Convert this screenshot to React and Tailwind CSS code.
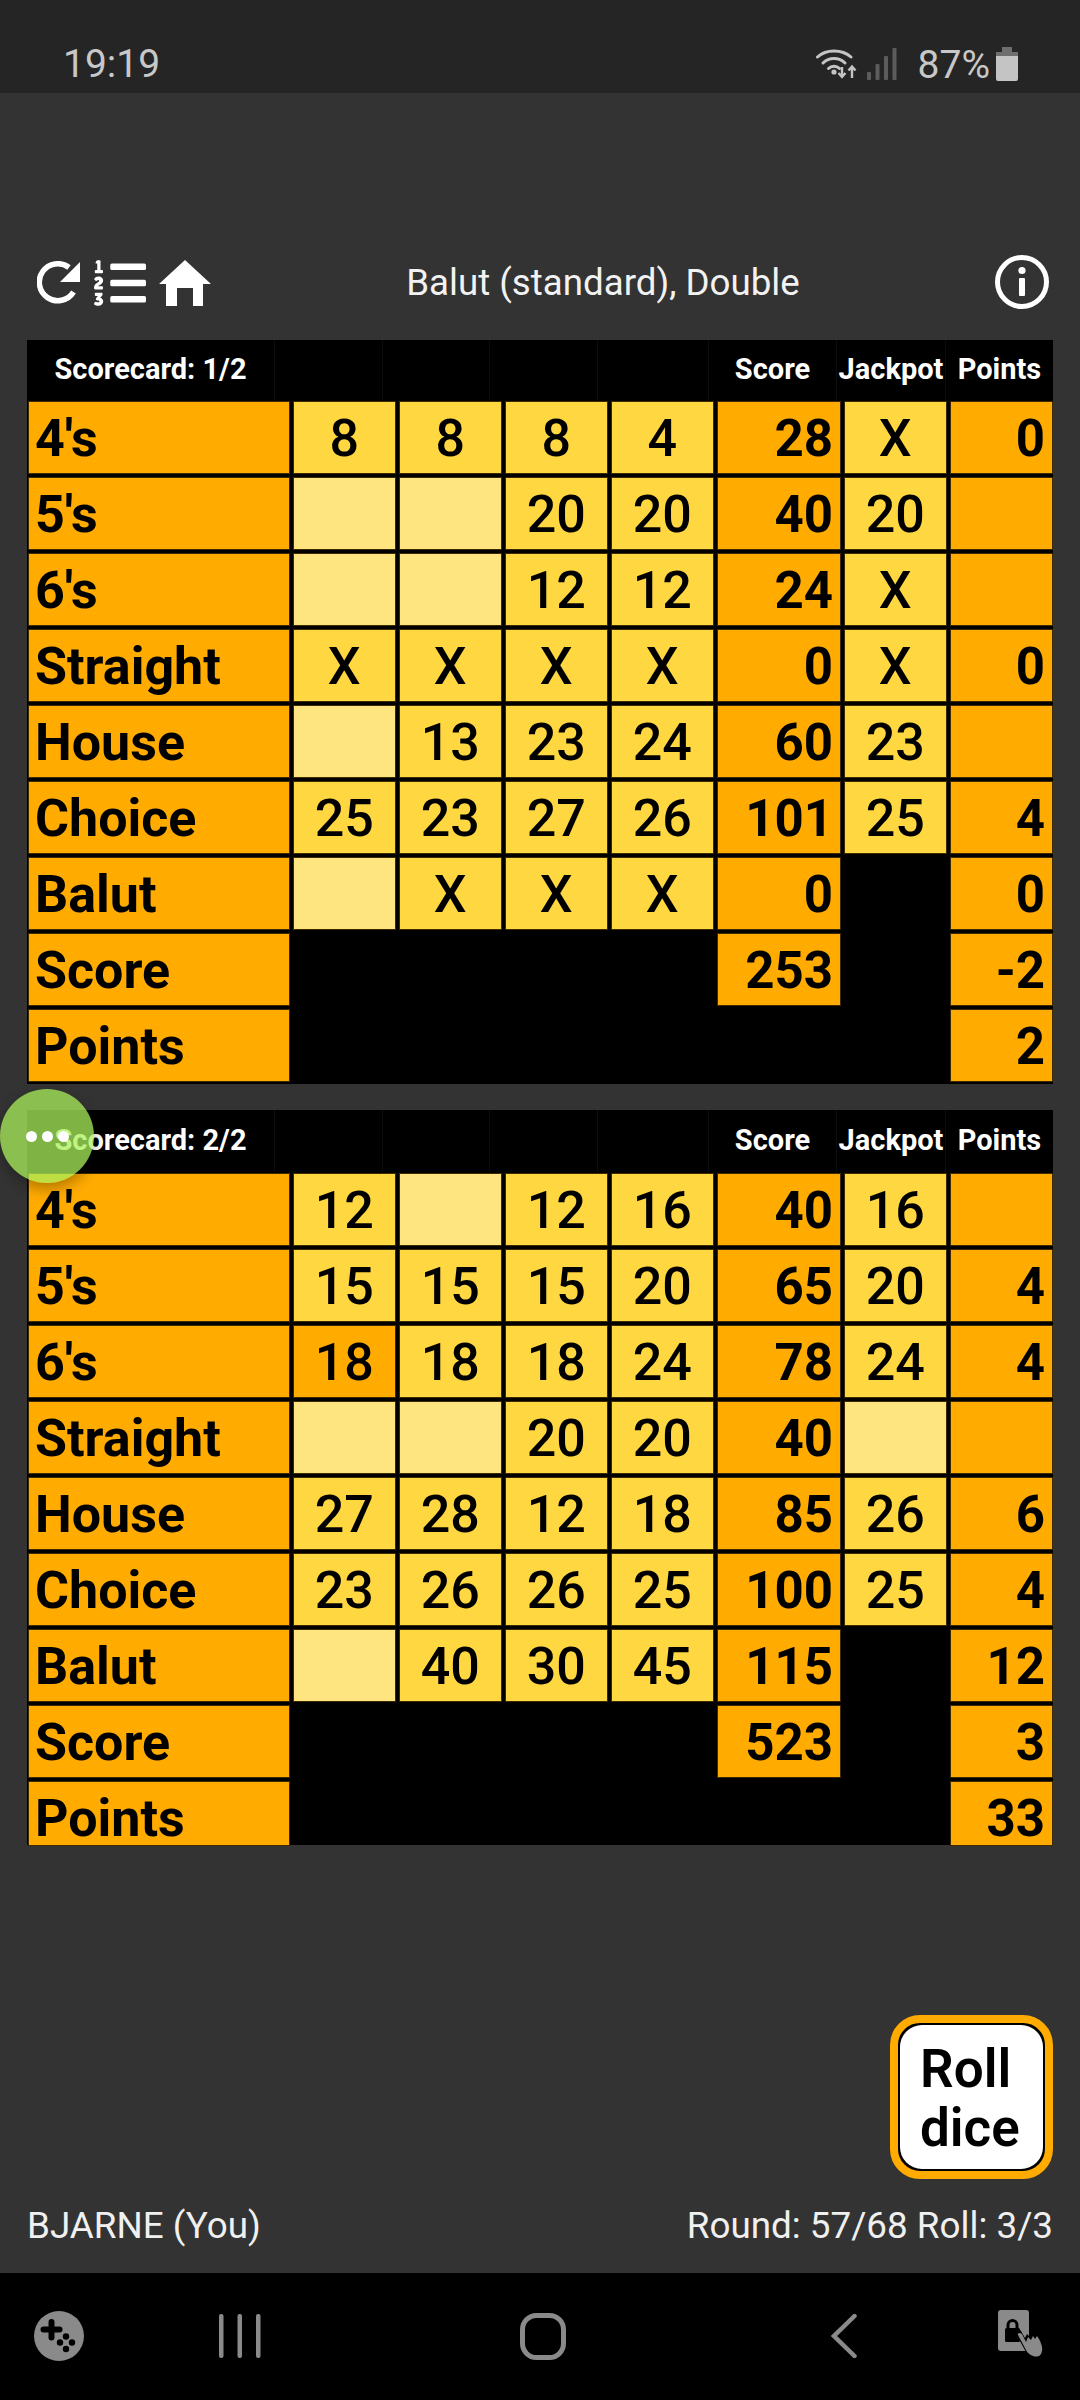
import React from "react";
import { FaListOl } from "react-icons/fa";

const O = "bg-[#ffab00]";
const Y = "bg-[#ffd740]";
const L = "bg-[#ffe57f]";
const EDGE = "shadow-[0_0_0_1px_#3d2a00]";
const TALL = "h-[71px] pt-[3px]";
const SHORT = "h-[63px] pt-[11px]";

const card1 = [
  ["4's", ["8", "8", "8", "4"], "28", "X", "0"],
  ["5's", [null, null, "20", "20"], "40", "20", ""],
  ["6's", [null, null, "12", "12"], "24", "X", ""],
  ["Straight", ["X", "X", "X", "X"], "0", "X", "0"],
  ["House", [null, "13", "23", "24"], "60", "23", ""],
  ["Choice", ["25", "23", "27", "26"], "101", "25", "4"],
  ["Balut", [null, "X", "X", "X"], "0", "B", "0"],
  ["Score", ["B", "B", "B", "B"], "253", "B", "-2"],
  ["Points", ["B", "B", "B", "B"], "B", "B", "2"],
];

const card2 = [
  ["4's", ["12", null, "12", "16"], "40", "16", ""],
  ["5's", ["15", "15", "15", "20"], "65", "20", "4"],
  ["6's", ["18!", "18", "18", "24"], "78", "24", "4"],
  ["Straight", [null, null, "20", "20"], "40", null, ""],
  ["House", ["27", "28", "12", "18"], "85", "26", "6"],
  ["Choice", ["23", "26", "26", "25"], "100", "25", "4"],
  ["Balut", [null, "40", "30", "45"], "115", "B", "12"],
  ["Score", ["B", "B", "B", "B"], "523", "B", "3"],
  ["Points", ["B", "B", "B", "B"], "B", "B", "33"],
];

function Value({ v }) {
  if (v === "B") return <div />;
  if (v === null) return <div className={`h-[71px] ${L} ${EDGE}`} />;
  const hot = v.endsWith("!");
  return (
    <div className={`${TALL} flex items-center justify-center text-[52px] leading-[44px] font-medium ${EDGE} ${hot ? O : Y}`}>
      {hot ? v.slice(0, -1) : v}
    </div>
  );
}

function Right({ v, size }) {
  if (v === "B") return <div />;
  return (
    <div className={`${size} flex items-center justify-end pr-[7px] text-[51px] leading-[44px] font-bold ${EDGE} ${O}`}>{v}</div>
  );
}

function Card({ title, rows, headerH, height, lastSize }) {
  return (
    <div className="mx-[27px] w-[1026px] bg-black" style={{ height }}>
      <div
        className="grid grid-cols-[248px_108px_107px_108px_111px_128px_109px_107px] text-white font-bold text-[29px]"
        style={{ height: headerH }}
      >
        <div className="flex items-center justify-center border-r border-[#0d0d0d]">{title}</div>
        <div className="border-r border-[#0d0d0d]" />
        <div className="border-r border-[#0d0d0d]" />
        <div className="border-r border-[#0d0d0d]" />
        <div className="border-r border-[#0d0d0d]" />
        <div className="flex items-center justify-center border-r border-[#0d0d0d]">Score</div>
        <div className="flex items-center justify-center border-r border-[#0d0d0d]">Jackpot</div>
        <div className="flex items-center justify-center">Points</div>
      </div>
      <div className="pt-[2px] pl-[2px] grid grid-cols-[260px_repeat(4,101.5px)_122.5px_repeat(2,101.5px)] gap-x-[4.5px] gap-y-[5px] text-black">
        {rows.map(([label, vals, score, jack, pts], r) => {
          const size = r === rows.length - 1 ? lastSize : TALL;
          return (
            <React.Fragment key={label}>
              <div className={`${size} flex items-center pl-[6px] text-[52px] leading-[44px] font-bold ${EDGE} ${O}`}>{label}</div>
              {vals.map((v, i) => (
                <Value key={i} v={v} />
              ))}
              <Right v={score} size={size} />
              <Value v={jack} />
              <Right v={pts} size={size} />
            </React.Fragment>
          );
        })}
      </div>
    </div>
  );
}

function Wifi() {
  return (
    <svg width="42" height="32" viewBox="0 0 42 32" fill="none" className="text-[#c4c4c4]">
      <g stroke="currentColor" strokeWidth="3" strokeLinecap="round">
        <path d="M1.5 9C10 1 26 1 35 9" />
        <path d="M7 15C13 9 23 9 29 15" />
        <path d="M12.5 20.5C15.5 17.5 20.5 17.5 23.5 20.5" />
      </g>
      <circle cx="18" cy="24" r="2.6" fill="currentColor" />
      <path d="M26 19v9m-3.5-3 3.5 4 3.5-4" stroke="currentColor" strokeWidth="2.4" />
      <path d="M36 30v-11m-3.5 3.5 3.5-4 3.5 4" stroke="currentColor" strokeWidth="2.4" />
    </svg>
  );
}

function Signal() {
  return (
    <svg width="30" height="32" viewBox="0 0 30 32" className="text-[#5c5c5c]" fill="currentColor">
      <rect x="0" y="24" width="4" height="8" rx="1" />
      <rect x="8.5" y="16" width="4" height="16" rx="1" />
      <rect x="17" y="8" width="4" height="24" rx="1" />
      <rect x="25.5" y="0" width="4" height="32" rx="1" />
    </svg>
  );
}

function Battery() {
  return (
    <svg width="22" height="34" viewBox="0 0 22 34">
      <path d="M6 0h10v5h6v5H0V5h6z" fill="#6e6e6e" />
      <path d="M0 9h22v23a2 2 0 0 1-2 2H2a2 2 0 0 1-2-2z" fill="#c4c4c4" />
    </svg>
  );
}

function StatusBar() {
  return (
    <div className="h-[93px] bg-[#252525] flex items-start justify-between pt-[44px] pl-[63px] pr-[62px] text-[#c8c8c8] text-[39px] leading-[40px]">
      <span>19:19</span>
      <div className="flex items-center -mt-[1px]">
        <Wifi />
        <div className="ml-[9px]">
          <Signal />
        </div>
        <span className="ml-[21px] pt-[2px]">87%</span>
        <div className="ml-[6px]">
          <Battery />
        </div>
      </div>
    </div>
  );
}

function Toolbar() {
  return (
    <div className="h-[86px] mt-[147px] mx-[37px] mr-[31px] flex items-center text-white">
      <div className="flex items-center">
        <svg width="44" height="44" viewBox="0 0 44 44" fill="none">
          <path d="M36.5 31A18.5 18.5 0 1 1 32 6.5" stroke="currentColor" strokeWidth="5.5" />
          <path d="M43 1v20H23z" fill="currentColor" />
        </svg>
        <FaListOl className="w-[52px] h-[52px] ml-[13px]" />
        <svg width="52" height="46" viewBox="0 0 52 46" fill="currentColor" className="ml-[13px]">
          <path d="M26 0L52 24H44V46H34V28H18V46H7V24H0z" />
        </svg>
      </div>
      <div className="flex-1 text-center text-[36.7px] text-[#f2f2f2]">Balut (standard), Double</div>
      <svg width="54" height="54" viewBox="0 0 54 54" fill="none" className="-mt-[2px]">
        <circle cx="27" cy="27" r="24.5" stroke="currentColor" strokeWidth="5" />
        <circle cx="27" cy="15.5" r="3.6" fill="currentColor" />
        <rect x="24" y="23" width="6" height="18" rx="1" fill="currentColor" />
      </svg>
    </div>
  );
}

function NavBar() {
  return (
    <div className="h-[127px] bg-black flex items-center pl-[34px] pb-[1px]">
      <svg width="50" height="50" viewBox="0 0 50 50">
        <circle cx="25" cy="25" r="25" fill="#8a8a8a" />
        <path d="M14.5 11a3 3 0 0 1 6 0v4.5h5a3 3 0 0 1 0 6h-5v5a3 3 0 0 1-6 0v-5h-5a3 3 0 0 1 0-6h5z" fill="#000" />
        <circle cx="32" cy="25.5" r="3.2" fill="#000" />
        <circle cx="26" cy="31.5" r="3.2" fill="#000" />
        <circle cx="38" cy="31.5" r="3.2" fill="#000" />
        <circle cx="32" cy="38" r="3.2" fill="#000" />
      </svg>
      <svg width="42" height="44" viewBox="0 0 42 44" className="ml-[135px]" fill="#8a8a8a">
        <rect x="0" y="0" width="4.5" height="44" rx="2" />
        <rect x="18.5" y="0" width="4.5" height="44" rx="2" />
        <rect x="37" y="0" width="4.5" height="44" rx="2" />
      </svg>
      <svg width="46" height="47" viewBox="0 0 46 47" fill="none" className="ml-[259px]">
        <rect x="2.5" y="2.5" width="41" height="42" rx="14" stroke="#8a8a8a" strokeWidth="5" />
      </svg>
      <svg width="26" height="44" viewBox="0 0 26 44" fill="none" className="ml-[265px]">
        <path d="M23.5 2L3 22l20.5 20" stroke="#8a8a8a" strokeWidth="4.5" strokeLinecap="round" />
      </svg>
      <svg width="48" height="52" viewBox="0 0 48 52" className="ml-[141px]">
        <rect x="0" y="0" width="31" height="41" rx="3" fill="#8a8a8a" />
        <rect x="7" y="18" width="15" height="14" rx="1.5" fill="#000" />
        <path d="M10 18v-3a4.5 4.5 0 0 1 9 0v3" fill="none" stroke="#000" strokeWidth="3" />
        <path d="M18 24l10 18c3 7 13 9 17 3 3-5 0-12-3-18l-3-4-2 4-3-5-2 5-3-3-2 4-4-7c-2-3-6-1-5 3z" fill="#000" />
        <path d="M20 25l8 15c3 6 12 9 15 4 3-5 0-11-2-15l-2-3-2 3-2-3-2 4-3-3-2 5-4-8c-2-2-5-1-4 1z" fill="#8a8a8a" />
      </svg>
    </div>
  );
}

export default function App() {
  return (
    <div className="relative w-[1080px] h-[2400px] bg-[#333333] flex flex-col font-['Roboto',sans-serif] overflow-hidden">
      <StatusBar />
      <Toolbar />
      <div className="mt-[14px]">
        <Card title="Scorecard: 1/2" rows={card1} headerH={60} height={744} lastSize={TALL} />
      </div>
      <div className="mt-[26px]">
        <Card title="Scorecard: 2/2" rows={card2} headerH={62} height={735} lastSize={SHORT} />
      </div>
      <div className="mt-[170px] pr-[27px] flex justify-end">
        <div className="w-[163px] h-[164px] rounded-[30px] border-[8px] border-[#ffab00] bg-black p-[2px]">
          <div className="w-full h-full rounded-[22px] bg-white pl-[20px] pt-[15px] text-black text-[53px] leading-[59px] font-semibold">
            <div>Roll</div>
            <div>dice</div>
          </div>
        </div>
      </div>
      <div className="mt-[26px] h-[42px] px-[27px] flex items-center justify-between text-[36.8px] text-[#f0f0f0]">
        <span>BJARNE (You)</span>
        <span>Round: 57/68 Roll: 3/3</span>
      </div>
      <div className="flex-1" />
      <NavBar />
      <div className="absolute left-0 top-[1089px] w-[94px] h-[94px] rounded-full bg-[#a9ef5a]/75 shadow-[0_6px_14px_rgba(0,0,0,0.3)] flex items-center justify-center gap-[5px]">
        <span className="w-[11px] h-[11px] rounded-full bg-white" />
        <span className="w-[11px] h-[11px] rounded-full bg-white" />
        <span className="w-[11px] h-[11px] rounded-full bg-white" />
      </div>
    </div>
  );
}
